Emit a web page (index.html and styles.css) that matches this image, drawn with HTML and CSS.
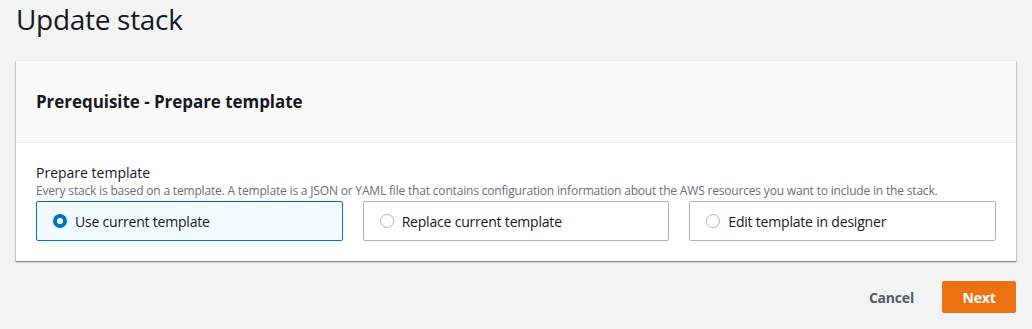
FILE: index.html
```html
<!DOCTYPE html>
<html lang="en">
<head>
  <meta charset="UTF-8">
  <title>Update stack</title>
  <link rel="stylesheet" href="styles.css">
</head>
<body>
  <div class="page">
    <h1 class="page-title">Update stack</h1>

    <div class="panel">
      <div class="panel-header">
        <h2>Prerequisite - Prepare template</h2>
      </div>
      <div class="panel-body">
        <div class="field-label">Prepare template</div>
        <div class="field-desc">Every stack is based on a template. A template is a JSON or YAML file that contains configuration information about the AWS resources you want to include in the stack.</div>
        <div class="tiles">
          <label class="tile selected">
            <span class="radio"></span>
            <span>Use current template</span>
          </label>
          <label class="tile">
            <span class="radio"></span>
            <span>Replace current template</span>
          </label>
          <label class="tile">
            <span class="radio"></span>
            <span>Edit template in designer</span>
          </label>
        </div>
      </div>
    </div>

    <div class="actions">
      <button class="btn btn-link">Cancel</button>
      <button class="btn btn-primary">Next</button>
    </div>
  </div>
</body>
</html>
```

FILE: styles.css
```css
* { margin: 0; padding: 0; box-sizing: border-box; }

body {
  font-family: 'Open Sans', 'Noto Sans', sans-serif;
  background-color: #f2f3f3;
  color: #16191f;
}

.page {
  padding: 0 16px;
}

.page-title {
  font-size: 28px;
  font-weight: 400;
  line-height: 36px;
  padding-top: 1px;
  height: 60px;
  letter-spacing: -0.3px;
}

.panel {
  background: #fff;
  box-shadow: 0 1px 1px 0 rgba(0, 28, 36, 0.3), 1px 1px 1px 0 rgba(0, 28, 36, 0.15), -1px 1px 1px 0 rgba(0, 28, 36, 0.15);
  border-top: 1px solid #eaeded;
}

.panel-header {
  background: #fafafa;
  border-bottom: 1px solid #eaeded;
  height: 82px;
  display: flex;
  align-items: center;
  padding: 0 20px;
}

.panel-header h2 {
  font-size: 17px;
  font-weight: 700;
  letter-spacing: -0.05px;
}

.panel-body {
  padding: 20px 20px 20px;
}

.field-label {
  font-size: 14px;
  line-height: 20px;
}

.field-desc {
  font-size: 12px;
  line-height: 16px;
  color: #687078;
  letter-spacing: -0.18px;
  margin-bottom: 2px;
}

.tiles {
  display: grid;
  grid-template-columns: repeat(3, 1fr);
  gap: 20px;
}

.tile {
  display: flex;
  align-items: center;
  gap: 8px;
  height: 40px;
  padding: 0 16px;
  border: 1px solid #aab7b8;
  border-radius: 2px;
  font-size: 14px;
  letter-spacing: -0.2px;
  cursor: pointer;
}

.tile.selected {
  background: #f1faff;
  border-color: #0073bb;
}

.radio {
  width: 14px;
  height: 14px;
  border-radius: 50%;
  border: 1px solid #aab7b8;
  background: #fff;
  flex-shrink: 0;
}

.tile.selected .radio {
  border: 4px solid #0073bb;
}

.actions {
  display: flex;
  justify-content: flex-end;
  align-items: center;
  gap: 8px;
  margin-top: 20px;
}

.btn {
  font-family: inherit;
  font-size: 14px;
  font-weight: 700;
  border: none;
  border-radius: 2px;
  height: 32px;
  padding: 0 20px;
  cursor: pointer;
  letter-spacing: -0.2px;
}

.btn-link {
  background: transparent;
  color: #545b64;
}

.btn-primary {
  background: #ec7211;
  color: #fff;
  width: 74px;
}
```
